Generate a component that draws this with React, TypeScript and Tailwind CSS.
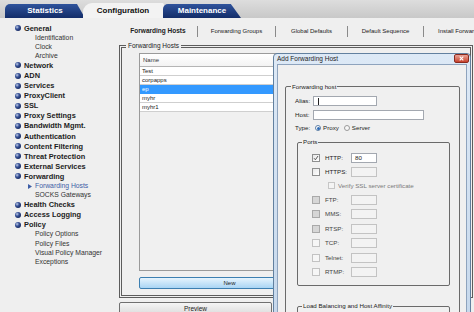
import React from 'react';

type NavItem = { label: string; sub?: boolean; active?: boolean };

const navItems: NavItem[] = [
  { label: 'General' },
  { label: 'Identification', sub: true },
  { label: 'Clock', sub: true },
  { label: 'Archive', sub: true },
  { label: 'Network' },
  { label: 'ADN' },
  { label: 'Services' },
  { label: 'ProxyClient' },
  { label: 'SSL' },
  { label: 'Proxy Settings' },
  { label: 'Bandwidth Mgmt.' },
  { label: 'Authentication' },
  { label: 'Content Filtering' },
  { label: 'Threat Protection' },
  { label: 'External Services' },
  { label: 'Forwarding' },
  { label: 'Forwarding Hosts', sub: true, active: true },
  { label: 'SOCKS Gateways', sub: true },
  { label: 'Health Checks' },
  { label: 'Access Logging' },
  { label: 'Policy' },
  { label: 'Policy Options', sub: true },
  { label: 'Policy Files', sub: true },
  { label: 'Visual Policy Manager', sub: true },
  { label: 'Exceptions', sub: true },
];

const hosts = ['Test', 'corpapps', 'ep', 'myhr', 'myhr1'];

const ports: { label: string; value?: string; state: 'checked' | 'open' | 'gray' | 'light' }[] = [
  { label: 'HTTP:', value: '80', state: 'checked' },
  { label: 'HTTPS:', state: 'open' },
  { label: 'FTP:', state: 'gray' },
  { label: 'MMS:', state: 'gray' },
  { label: 'RTSP:', state: 'gray' },
  { label: 'TCP:', state: 'light' },
  { label: 'Telnet:', state: 'light' },
  { label: 'RTMP:', state: 'light' },
];

function Bullet() {
  return (
    <span className="w-[6px] h-[6px] rounded-full bg-[radial-gradient(circle_at_35%_35%,#c3cfe8_0%,#3b559a_35%,#0f2158_80%)] shrink-0" />
  );
}

function Sep() {
  return <div className="w-px h-[11px] bg-[#8a8a8a] shrink-0" />;
}

function CheckBox({ state }: { state: 'checked' | 'open' | 'gray' | 'light' }) {
  const cls =
    state === 'gray'
      ? 'bg-[#d6d6d6] border-[#a9a9a9]'
      : state === 'light'
        ? 'bg-[#f6f6f6] border-[#c2c2c2]'
        : 'bg-gradient-to-br from-[#e8e8e8] to-[#ffffff] border-[#8e8f8f]';
  return (
    <div className={`w-[8px] h-[8px] border ${cls} flex items-center justify-center shrink-0`}>
      {state === 'checked' && (
        <svg width="6" height="6" viewBox="0 0 6 6">
          <path d="M1 3.2 L2.4 4.8 L5 1" fill="none" stroke="#4a4a4a" strokeWidth="0.9" />
        </svg>
      )}
    </div>
  );
}

export default function App() {
  return (
    <div className="relative w-[474px] h-[312px] overflow-hidden bg-[#efefef] font-['Liberation_Sans',Arial,sans-serif] text-[#1c1c1c]">
      {/* Top tabs */}
      <div className="h-[18px] flex items-end pl-[5px] bg-gradient-to-b from-[#dddddd] to-[#c8c8c8]">
        <div className="w-[80px] h-[14px] rounded-tl-[5px] bg-gradient-to-b from-[#2f539c] to-[#132d69] [clip-path:polygon(0_0,90%_0,100%_100%,0_100%)] flex items-center justify-center text-white font-bold text-[8px]">
          Statistics
        </div>
        <div className="-ml-[2px] w-[88px] h-[15px] rounded-tl-[9px] bg-[#f3f3f3] [clip-path:polygon(0_0,91%_0,100%_100%,0_100%)] flex items-center justify-center pr-[8px] font-bold text-[8px] text-[#111]">
          Configuration
        </div>
        <div className="-ml-[8px] w-[78px] h-[14px] rounded-tl-[5px] bg-gradient-to-b from-[#2f539c] to-[#132d69] [clip-path:polygon(0_0,87%_0,100%_100%,0_100%)] flex items-center justify-center text-white font-bold text-[8px]">
          Maintenance
        </div>
      </div>

      <div className="flex">
        {/* Sidebar */}
        <div className="w-[119px] shrink-0 pt-[5px] flex flex-col">
          {navItems.map((item) =>
            item.sub ? (
              <div
                key={item.label}
                className={`h-[9.1px] flex items-center text-[6.8px] whitespace-nowrap ${
                  item.active ? 'pl-[28px] text-[#3d5ea6]' : 'pl-[35px] text-[#333]'
                }`}
              >
                {item.active && (
                  <svg width="4" height="5" viewBox="0 0 4 5" className="mr-[3px]">
                    <polygon points="0,0 4,2.5 0,5" fill="#3d5ea6" />
                  </svg>
                )}
                {item.label}
              </div>
            ) : (
              <div key={item.label} className="h-[10.1px] flex items-center gap-[3px] pl-[15px] text-[7.4px] font-bold whitespace-nowrap">
                <Bullet />
                {item.label}
              </div>
            )
          )}
        </div>

        {/* Main */}
        <div className="w-[355px] shrink-0 flex flex-col">
          <div className="h-[24px] pt-[2px] flex items-center text-[6px] text-[#222] whitespace-nowrap overflow-hidden">
            <div className="w-[78px] shrink-0 text-center font-bold text-[6.5px]">Forwarding Hosts</div>
            <Sep />
            <div className="w-[77px] shrink-0 text-center">Forwarding Groups</div>
            <Sep />
            <div className="w-[71px] shrink-0 text-center">Global Defaults</div>
            <Sep />
            <div className="w-[75px] shrink-0 text-center">Default Sequence</div>
            <Sep />
            <div className="pl-[14px] shrink-0">Install Forwarding Hosts</div>
          </div>

          <fieldset className="w-[354px] h-[256px] border-[3px] border-double border-[#5c5c5c] pl-[17px] pt-[3px]">
            <legend className="-ml-[13px] px-[2px] text-[6.5px] leading-[8px] text-[#222]">Forwarding Hosts</legend>
            <div className="w-[181px] h-[218px] border border-[#9a9a9a] bg-[#f0f0f0] flex flex-col text-[6px]">
              <div className="h-[13px] flex items-center pl-[3px] bg-gradient-to-b from-[#ffffff] to-[#f3f3f3] border-b border-[#b5b5b5] text-[#333]">
                Name
              </div>
              {hosts.map((h) => (
                <div
                  key={h}
                  className={`h-[9px] flex items-center pl-[2px] border-b ${
                    h === 'ep' ? 'bg-[#3399ff] text-white border-[#3399ff]' : 'bg-white border-[#cfcfcf] text-[#222]'
                  }`}
                >
                  {h}
                </div>
              ))}
            </div>
            <div className="mt-[6px] w-[181px] h-[12px] rounded-[2px] border border-[#3c7fb1] bg-gradient-to-b from-[#e6f4fd] to-[#a9d5f4] flex items-center justify-center text-[6px] text-[#222]">
              New
            </div>
          </fieldset>

          <div className="mt-[4px] w-[153px] h-[13px] rounded-[2px] border border-[#707070] bg-gradient-to-b from-[#f5f5f5] to-[#dddddd] flex items-center justify-center text-[6.5px] text-[#222]">
            Preview
          </div>
        </div>
      </div>

      {/* Dialog window */}
      <div className="absolute left-[273px] top-[53px] w-[198px] h-[270px] rounded-t-[4px] border border-[#62809f] bg-gradient-to-b from-[#dde9f6] to-[#c6d8ec] px-[3px] flex flex-col">
        <div className="h-[14px] flex items-center justify-between">
          <span className="text-[6.5px] text-[#1e1e1e]">Add Forwarding Host</span>
          <div className="-mr-[2px] w-[15px] h-[9px] rounded-[2px] border border-[#8a2a1e] bg-gradient-to-b from-[#eaa296] to-[#c63f2a] flex items-center justify-center">
            <svg width="5" height="5" viewBox="0 0 5 5">
              <path d="M0.7 0.7 L4.3 4.3 M4.3 0.7 L0.7 4.3" stroke="#fff" strokeWidth="1.1" />
            </svg>
          </div>
        </div>
        <div className="flex-1 border border-[#8ea3bd] bg-[#f0f0f0] pl-[7px] pr-[6px] pt-[18px] text-[6.2px] text-[#222]">
          <fieldset className="border border-[#6a6a6a] rounded-[2px] pl-[9px] pr-[9px] pt-[3.5px] h-[240px]">
            <legend className="-ml-[4px] px-[1px] leading-[8px]">Forwarding host</legend>
            <div className="h-[13.5px] flex items-center">
              <span className="w-[18px]">Alias:</span>
              <div className="w-[64px] h-[10px] bg-white border border-[#a3a8b0] flex items-center pl-[4px]">
                <div className="w-px h-[7px] bg-[#222]" />
              </div>
            </div>
            <div className="h-[13.5px] flex items-center">
              <span className="w-[18px]">Host:</span>
              <div className="w-[111px] h-[10px] bg-white border border-[#a3a8b0]" />
            </div>
            <div className="h-[13.5px] flex items-center">
              <span className="w-[20px]">Type:</span>
              <div className="w-[6px] h-[6px] rounded-full border border-[#5d7fa6] bg-white flex items-center justify-center">
                <div className="w-[3px] h-[3px] rounded-full bg-[#2f6bb5]" />
              </div>
              <span className="ml-[2px]">Proxy</span>
              <div className="ml-[5px] w-[6px] h-[6px] rounded-full border border-[#9a9a9a] bg-[#f7f7f7]" />
              <span className="ml-[2px]">Server</span>
            </div>

            <fieldset className="mt-[3.5px] ml-[2px] border border-[#6a6a6a] rounded-[2px] pl-[14px] pt-[4px] pb-[6px]">
              <legend className="-ml-[10px] px-[1px] leading-[8px]">Ports</legend>
              {ports.map((p) => (
                <React.Fragment key={p.label}>
                  <div className="h-[14.5px] flex items-center">
                    <CheckBox state={p.state} />
                    <span className={`ml-[5px] w-[26px] ${p.state === 'gray' || p.state === 'light' ? 'text-[#444]' : ''}`}>{p.label}</span>
                    <div
                      className={`w-[26px] h-[10px] border flex items-center pl-[3px] ${
                        p.value ? 'bg-white border-[#a3a8b0]' : 'bg-[#f3f3f3] border-[#c3c3c3]'
                      }`}
                    >
                      {p.value}
                    </div>
                  </div>
                  {p.label === 'HTTPS:' && (
                    <div className="h-[13px] flex items-center pl-[16px]">
                      <div className="w-[7px] h-[7px] border border-[#c6c6c6] bg-[#f4f4f4]" />
                      <span className="ml-[3px] text-[#7a7a7a]">Verify SSL server certificate</span>
                    </div>
                  )}
                </React.Fragment>
              ))}
            </fieldset>

            <fieldset className="mt-[16px] ml-[2px] border border-[#6a6a6a] rounded-[2px] h-[30px]">
              <legend className="ml-[4px] px-[1px] leading-[8px]">Load Balancing and Host Affinity</legend>
            </fieldset>
          </fieldset>
        </div>
      </div>
    </div>
  );
}
